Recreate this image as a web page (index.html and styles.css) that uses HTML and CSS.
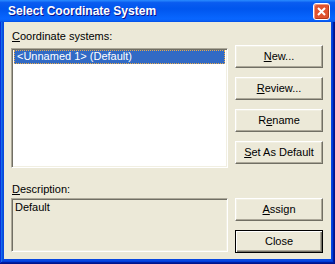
FILE: index.html
```html
<!DOCTYPE html>
<html>
<head>
<meta charset="utf-8">
<link rel="stylesheet" href="styles.css">
</head>
<body>
<div class="window">
  <div class="titlebar">
    <div class="title">Select Coordinate System</div>
    <div class="closebox">
      <svg class="xmark" width="9" height="9" viewBox="0 0 9 9"><path d="M1 1 L8 8 M8 1 L1 8" stroke="#ffffff" stroke-width="2"/></svg>
    </div>
  </div>
  <div class="client">
    <div class="row top-row">
      <div class="left-col top-left">
        <div class="label"><u>C</u>oordinate systems:</div>
        <div class="listbox">
          <div class="item selected">&lt;Unnamed 1&gt; (Default)</div>
        </div>
      </div>
      <div class="right-col top-right">
        <div class="btn"><span><u>N</u>ew...</span></div>
        <div class="btn"><span><u>R</u>eview...</span></div>
        <div class="btn"><span>R<u>e</u>name</span></div>
        <div class="btn"><span><u>S</u>et As Default</span></div>
      </div>
    </div>
    <div class="row bottom-row">
      <div class="left-col">
        <div class="label desc-label"><u>D</u>escription:</div>
        <div class="descbox">Default</div>
      </div>
      <div class="right-col bottom-right">
        <div class="btn"><span><u>A</u>ssign</span></div>
        <div class="btn default"><span>Close</span></div>
      </div>
    </div>
  </div>
</div>
</body>
</html>
```
FILE: styles.css
```css
html, body {
  margin: 0;
  padding: 0;
  background: #fff;
}
.window {
  width: 335px;
  height: 264px;
  display: flex;
  flex-direction: column;
  background: #0848e0;
  box-shadow: inset -1px -1px #00138c, inset 1px 1px #0831d9, inset -2px -2px #001ea0, inset 2px 2px #166aee, inset -3px -3px #003bda, inset 3px 3px #0855dd;
  padding: 0 4px 5px 4px;
  box-sizing: border-box;
  font-family: "Liberation Sans", Arial, sans-serif;
  font-size: 11px;
  color: #000;
}
.titlebar {
  height: 22px;
  margin: 0 -4px;
  padding: 0 5px 0 8px;
  display: flex;
  align-items: center;
  justify-content: space-between;
  background: linear-gradient(to bottom, #2a8cff 0%, #0a5cf0 12%, #0056ee 40%, #0866ff 85%, #0862fa 92%, #0450e6 100%);
}
.title {
  color: #fff;
  font-weight: bold;
  font-size: 12px;
  text-shadow: 1px 1px #0f1089;
}
.closebox {
  width: 17px;
  height: 17px;
  box-sizing: border-box;
  border: 1px solid #ffffff;
  border-radius: 3px;
  background: #e0532f;
  box-shadow: inset 1px 1px #f39a7e, inset -1px -1px #b83a18;
  display: flex;
  align-items: center;
  justify-content: center;
  margin-top: 1px;
}
.xmark { display: block; }
.client {
  flex: 1;
  background: #ece9d8;
  padding: 0 8px 0 7px;
  display: flex;
  flex-direction: column;
}
.row {
  display: flex;
  align-items: flex-start;
  gap: 7px;
}
.left-col {
  width: 217px;
  display: flex;
  flex-direction: column;
}
.top-left { margin-top: 8px; }
.label {
  height: 13px;
  line-height: 13px;
  padding-left: 1px;
}
.listbox {
  margin-top: 5px;
  height: 120px;
  box-sizing: border-box;
  background: #fff;
  border: 1px solid;
  border-color: #aca899 #fff #fff #aca899;
  box-shadow: inset 1px 1px #716f64, inset -1px -1px #f1efe2;
  padding: 1px 2px 2px 2px;
}
.item {
  height: 14px;
  line-height: 13px;
  padding-left: 3px;
  box-sizing: border-box;
}
.item.selected {
  background: #316ac5;
  color: #fff;
  outline: 1px dotted #e7a94a;
  outline-offset: -1px;
}
.right-col {
  width: 88px;
  display: flex;
  flex-direction: column;
  gap: 9px;
}
.top-right { margin-top: 23px; }
.btn {
  height: 23px;
  box-sizing: border-box;
  background: #ece9d8;
  border: 1px solid;
  border-color: #fff #716f64 #716f64 #fff;
  box-shadow: inset -1px -1px #aca899, inset 1px 1px #f1efe2;
  display: flex;
  align-items: center;
  justify-content: center;
  line-height: 13px;
}
.btn.default {
  border: 1px solid #000;
  box-shadow: inset 1px 1px #fff, inset -1px -1px #716f64, inset -2px -2px #aca899;
}
.bottom-row { margin-top: 15px; }
.descbox {
  margin-top: 2px;
  height: 54px;
  box-sizing: border-box;
  background: #ece9d8;
  border: 1px solid;
  border-color: #aca899 #fff #fff #aca899;
  box-shadow: inset 1px 1px #716f64, inset -1px -1px #f1efe2;
  padding: 2px 3px;
  line-height: 13px;
}
.bottom-right { margin-top: 15px; }
```
